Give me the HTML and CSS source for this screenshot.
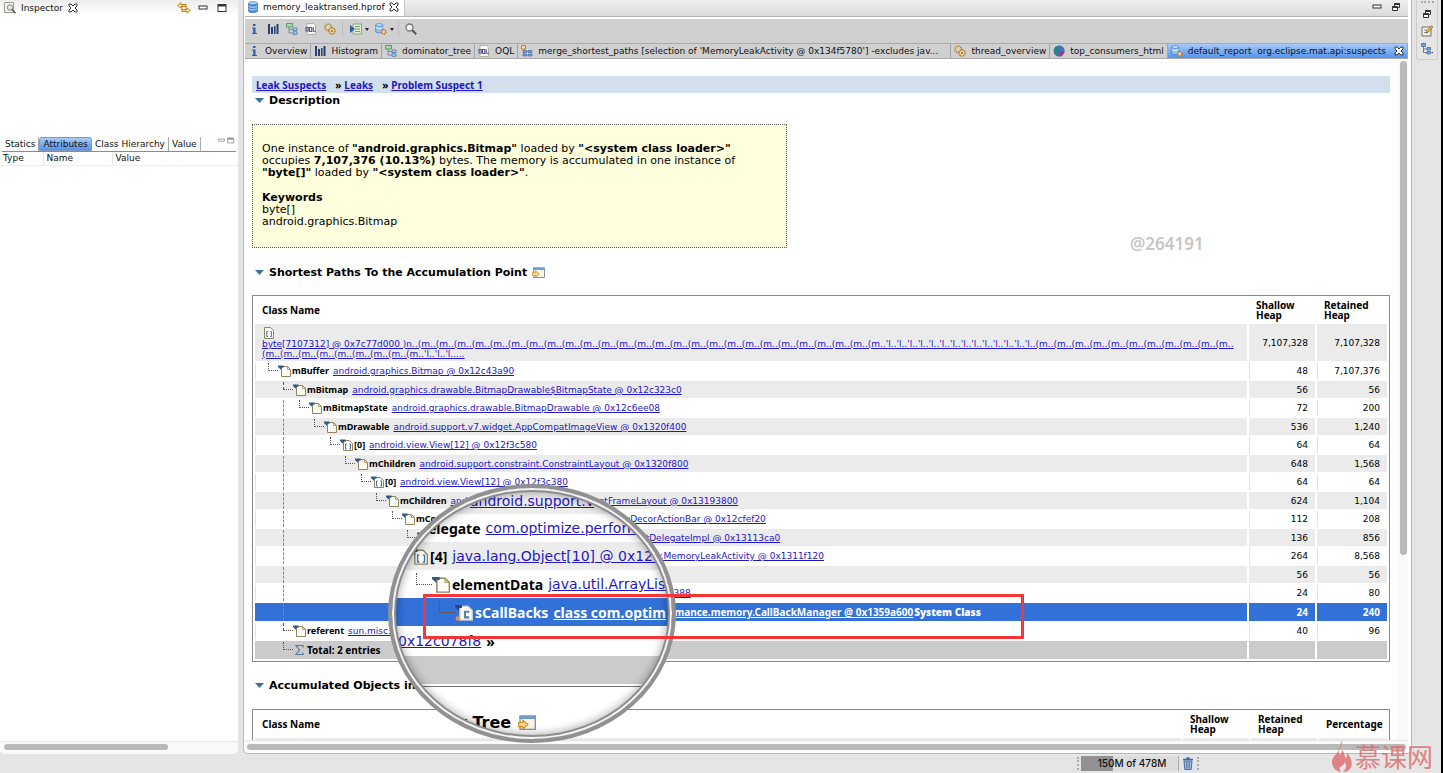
FILE: index.html
```html
<!DOCTYPE html>
<html lang="en">
<head>
    <meta charset="UTF-8">
    <meta name="viewport" content="width=device-width, initial-scale=1.0">
    <title>Memory Analyzer</title>
    <link rel="stylesheet" href="styles.css">
</head>
<body>
    <!-- shared icons -->
    <svg class="sprites" width="0" height="0">
        <symbol id="i-close" viewBox="0 0 10 10"><path d="M1 1h2l2 2 2-2h2v2L7 5l2 2v2H7L5 7 3 9H1V7l2-2-2-2z" fill="#fff" stroke="#333"/></symbol>
        <symbol id="i-min" viewBox="0 0 10 10"><rect x="1" y="3" width="8" height="3" fill="#fff" stroke="#333"/></symbol>
        <symbol id="i-max" viewBox="0 0 10 10"><rect x="1" y="1.500" width="8" height="7" fill="#fff" stroke="#333"/><path d="M1 2.500h8" stroke="#333" stroke-width="2"/></symbol>
        <symbol id="i-restore" viewBox="0 0 10 10"><path d="M3.500 1.500h5v4h-5z" fill="#fff" stroke="#333"/><path d="M3.500 2h5" stroke="#333" stroke-width="2"/><path d="M1.500 4.500h5v4h-5z" fill="#fff" stroke="#333"/><path d="M1.500 5h5" stroke="#333" stroke-width="2"/></symbol>
        <symbol id="i-db" viewBox="0 0 12 12"><path d="M1.500 2.500v7.500c0 2 9 2 9 0V2.500z" fill="#4b8fd8" stroke="#2c63a8" stroke-width=".7"/><ellipse cx="6" cy="2.300" rx="4.500" ry="1.600" fill="#b9dcf8" stroke="#2c63a8" stroke-width=".7"/><path d="M1.500 5c1 1.600 8 1.600 9 0M1.500 7.700c1 1.600 8 1.600 9 0" fill="none" stroke="#d5eafb" stroke-width=".9"/></symbol>
        <symbol id="i-info" viewBox="0 0 12 12"><path d="M5 1h2.500v2H5zM4 4.500h3.500V10H9v1H4v-1h1.200V5.500H4z" fill="#2d5f9e"/></symbol>
        <symbol id="i-hist" viewBox="0 0 12 12"><path d="M1 1h2v10H1zM4 4h2v7H4zM7 3h1.500v8H7zM9.500 1h2v10h-2z" fill="#2a3f74"/></symbol>
        <symbol id="i-tree" viewBox="0 0 12 12"><path d="M3 4v6h5M3 6.500h5" fill="none" stroke="#557f90" stroke-width=".8"/><path d="M.5.5h6v3.500h-6z" fill="#a5dba6" stroke="#3f8e55" stroke-width=".8"/><path d="M7 5h4v2.500H7zM7 8.800h4v2.500H7z" fill="#b4d3ee" stroke="#4676a6" stroke-width=".8"/></symbol>
        <symbol id="i-paths" viewBox="0 0 12 12"><path d="M3 4v6h5M3 6.500h5" fill="none" stroke="#4d719f" stroke-width=".8"/><path d="M.5.5h4v3.500h-4z" fill="#ffd9a8" stroke="#e2731e"/><path d="M2 5.500h3.500v2H2zM7.500 5.500H11v2H7.500zM2 9h3.500v2H2zM7.500 9H11v2H7.500z" fill="#7ea4d8" stroke="#3d68a8" stroke-width=".7"/></symbol>
        <symbol id="i-oql" viewBox="0 0 12 12"><path d="M2 .5h6.500l2 2v9H2z" fill="#f7f7f7" stroke="#a49b8a" stroke-width=".7"/><path d="M1 4.500h2.200v3.500H1zM4.500 4.500h2.200v4H4.500zM8.300 4.300v4H11" fill="none" stroke="#56558c" stroke-width="1.100"/></symbol>
        <symbol id="i-gears" viewBox="0 0 12 12"><circle cx="4.300" cy="4.300" r="3.200" fill="#e4d3b2" stroke="#a87f45" stroke-width="1.600" stroke-dasharray="1.300 .8"/><circle cx="8" cy="8" r="3" fill="#f4dca6" stroke="#b07a2c" stroke-width="1.600" stroke-dasharray="1.300 .7"/><circle cx="8" cy="8" r="1" fill="#8d6327"/></symbol>
        <symbol id="i-run" viewBox="0 0 12 12"><path d="M3 1h8.500v10H3z" fill="#e2eccf" stroke="#7a9a72" stroke-width=".8"/><path d="M5 3.500h5M5 6h5M5 8.500h5" stroke="#6fa070"/><path d="M0 2l5 4-5 4z" fill="#2f5f95"/></symbol>
        <symbol id="i-report" viewBox="0 0 12 12"><path d="M.7 2v6.500c0 1.800 7 1.800 7 0V2z" fill="#8fc0ec" stroke="#3a75b8" stroke-width=".7"/><ellipse cx="4.200" cy="2" rx="3.500" ry="1.300" fill="#d6ecfc" stroke="#3a75b8" stroke-width=".7"/><path d="M.7 4.500c1 1.300 6 1.300 7 0" fill="none" stroke="#fff" stroke-width=".8"/><circle cx="8.800" cy="8.800" r="2.200" fill="#f2cf94" stroke="#b0742a" stroke-width="1.400" stroke-dasharray="1.200 .6"/></symbol>
        <symbol id="i-search" viewBox="0 0 12 12"><circle cx="4.500" cy="4.500" r="3.500" fill="#eef3f7" stroke="#777" stroke-width="1.300"/><path d="M7 7l4.200 4.200" stroke="#6b5544" stroke-width="2"/></symbol>
        <symbol id="i-inspect" viewBox="0 0 12 12"><path d="M.5.5h9v10h-9z" fill="#f4f4ec" stroke="#9a9a8c"/><circle cx="6" cy="5.500" r="2.700" fill="#d9ece0" stroke="#758a80"/><path d="M8 7.500l3.500 3.800" stroke="#555" stroke-width="1.500"/></symbol>
        <symbol id="i-link" viewBox="0 0 14 12"><path d="M.5 3.500L4 .8v1.700h5v2H4v1.700z M13.500 8.500L10 11.200V9.500H5v-2h5V5.800z" fill="#fbe3a0" stroke="#c08a2c"/><path d="M5 2.500v7M9 2.500v7" stroke="#c08a2c"/></symbol>
        <symbol id="i-pie" viewBox="0 0 12 12"><circle cx="6" cy="6" r="5.500" fill="#2d7f91"/><path d="M6 6V.5A5.500 5.500 0 0 1 11.500 6z" fill="#4a6fc0"/><path d="M6 6h5.500A5.500 5.500 0 0 1 6 11.500z" fill="#a8388d"/></symbol>
        <symbol id="i-doc" viewBox="0 0 13 12"><path d="M3.500 1.500h6l3 3v7h-9z" fill="#fdfdf6" stroke="#8d8460"/><path d="M9.500 1.500v3h3" fill="none" stroke="#b3a15e"/><path d="M0 .5h5.500v2.200H3.200V5L0 2z" fill="#34597f"/></symbol>
        <symbol id="i-array" viewBox="0 0 13 12"><path d="M3.500 1.500h6l3 3v7h-9z" fill="#fdfdf6" stroke="#8d8460"/><path d="M6.800 5H5.500v5h1.300M9.200 5h1.300v5H9.200" fill="none" stroke="#49719f"/><path d="M0 .5h5.500v2.200H3.200V5L0 2z" fill="#34597f"/></symbol>
        <symbol id="i-bytes" viewBox="0 0 12 12"><path d="M1.500.5h6l3 3v8h-9z" fill="#fdfdf6" stroke="#8d8460"/><path d="M5 4.500H3.800v5H5M7.200 4.500h1.200v5H7.200" fill="none" stroke="#49719f"/></symbol>
        <symbol id="i-class" viewBox="0 0 13 12"><path d="M3.500 1.500h6l3 3v7h-9z" fill="#fdfdf6" stroke="#c8cdd2"/><path d="M10.300 5.500H7.200v4h3.100" fill="none" stroke="#5c7fa5" stroke-width="1.500"/><path d="M0 .5h5v2.200H3V5L0 2z" fill="#24487e"/><circle cx="2" cy="10.300" r="1.600" fill="#f28a35"/></symbol>
        <symbol id="i-sum" viewBox="0 0 12 12"><path d="M9.500 3.500V1.500H2.500L6 6l-3.500 4.500h7V8.500" fill="none" stroke="#567a99" stroke-width="1.200"/></symbol>
        <symbol id="i-open" viewBox="0 0 13 11"><path d="M1.500 1h11v9.500h-11z" fill="#f6f4ea" stroke="#8d9099"/><path d="M1 .5h12v2.500H1z" fill="#6f9bd1"/><path d="M.5 5.500h3V3.800L7.200 7l-3.700 3.200V8.500h-3z" fill="#fbd789" stroke="#cf8f2c" stroke-width=".8"/></symbol>
        <symbol id="i-twist" viewBox="0 0 9 5"><path d="M0 0h9L4.500 5z" fill="#3d6f9f"/></symbol>
        <symbol id="i-note" viewBox="0 0 12 12"><path d="M1 2h9v9H1z" fill="#f4f4e2" stroke="#6d6d60"/><path d="M3 5h3M3 7.500h4" stroke="#888"/><path d="M5 8l1-2.500L10.500.8l1.300 1.300L7.300 7z" fill="#f4cf3e" stroke="#5c4b1c" stroke-width=".7"/></symbol>
        <symbol id="i-outline" viewBox="0 0 12 12"><path d="M2.500 4v5.500H6M2.500 6H6" fill="none" stroke="#5b7fb0"/><path d="M.5.500h4v3h-4zM6 4.500h3.500V7H6zM6 8.500h3.500V11H6z" fill="#7da3db" stroke="#3e69ab" stroke-width=".8"/><path d="M10.500 9.500h1.500" stroke="#333"/></symbol>
        <symbol id="i-trash" viewBox="0 0 11 13"><path d="M1.500 4h8l-.8 8.500H2.300z" fill="#a9c3e2" stroke="#44689b"/><path d="M4 5v6.500M5.500 5v6.500M7 5v6.500" stroke="#44689b" stroke-width=".7"/><path d="M.5 2.500h10M4 1h3" stroke="#44689b" stroke-width="1.400"/></symbol>
    </svg>

    <div class="workbench">
        <aside class="inspector">
            <div class="view-head">
                <svg class="icon"><use href="#i-inspect"/></svg>
                <span>Inspector</span>
                <button class="tool small" aria-label="Close"><svg><use href="#i-close"/></svg></button>
                <button class="tool link push" aria-label="Link"><svg><use href="#i-link"/></svg></button>
                <button class="tool small" aria-label="Minimize"><svg><use href="#i-min"/></svg></button>
                <button class="tool small" aria-label="Maximize"><svg><use href="#i-max"/></svg></button>
            </div>
            <div class="inspector-top"></div>
            <div class="inspector-tabs">
                <button>Statics</button>
                <button class="active">Attributes</button>
                <button>Class Hierarchy</button>
                <button>Value</button>
                <svg class="mini push"><use href="#i-min"/></svg>
                <svg class="mini"><use href="#i-max"/></svg>
            </div>
            <table class="attributes">
                <tr><th>Type</th><th>Name</th><th>Value</th></tr>
            </table>
            <div class="hscroll"><div class="thumb"></div></div>
        </aside>

        <main class="editor">
            <div class="editor-head">
                <div class="file-tab">
                    <svg class="icon"><use href="#i-db"/></svg>
                    <span>memory_leaktransed.hprof</span>
                    <button class="tool small" aria-label="Close"><svg><use href="#i-close"/></svg></button>
                </div>
                <button class="tool small push" aria-label="Minimize"><svg><use href="#i-min"/></svg></button>
                <button class="tool small" aria-label="Restore"><svg><use href="#i-restore"/></svg></button>
            </div>
            <div class="toolbar">
                <button class="tool" aria-label="Overview"><svg><use href="#i-info"/></svg></button>
                <button class="tool" aria-label="Histogram"><svg><use href="#i-hist"/></svg></button>
                <button class="tool" aria-label="Dominator tree"><svg><use href="#i-tree"/></svg></button>
                <button class="tool" aria-label="OQL"><svg><use href="#i-oql"/></svg></button>
                <button class="tool" aria-label="Threads"><svg><use href="#i-gears"/></svg></button>
                <span class="sep"></span>
                <button class="tool drop" aria-label="Run report"><svg><use href="#i-run"/></svg></button>
                <button class="tool drop" aria-label="Query browser"><svg><use href="#i-report"/></svg></button>
                <span class="sep"></span>
                <button class="tool" aria-label="Search"><svg><use href="#i-search"/></svg></button>
            </div>
            <div class="page-tabs">
                <button><svg class="icon"><use href="#i-info"/></svg>Overview</button>
                <button><svg class="icon"><use href="#i-hist"/></svg>Histogram</button>
                <button><svg class="icon"><use href="#i-tree"/></svg>dominator_tree</button>
                <button><svg class="icon"><use href="#i-oql"/></svg>OQL</button>
                <button class="wide"><svg class="icon"><use href="#i-paths"/></svg>merge_shortest_paths [selection of 'MemoryLeakActivity @ 0x134f5780'] -excludes jav...</button>
                <button><svg class="icon"><use href="#i-gears"/></svg>thread_overview</button>
                <button><svg class="icon"><use href="#i-pie"/></svg>top_consumers_html</button>
                <button class="active"><svg class="icon"><use href="#i-report"/></svg>default_report&nbsp; org.eclipse.mat.api:suspects<svg class="icon x"><use href="#i-close"/></svg></button>
            </div>

            <div class="page">
                <div class="report">
                    <nav class="crumbs">
                        <a href="#">Leak Suspects</a><span>»</span><a href="#">Leaks</a><span>»</span><a href="#">Problem Suspect 1</a>
                    </nav>
                    <h2><svg class="twist"><use href="#i-twist"/></svg>Description</h2>
                    <div class="description">
                        <p>One instance of <b>"android.graphics.Bitmap"</b> loaded by <b>"&lt;system class loader&gt;"</b><br>
                        occupies <b>7,107,376 (10.13%)</b> bytes. The memory is accumulated in one instance of<br>
                        <b>"byte[]"</b> loaded by <b>"&lt;system class loader&gt;"</b>.</p>
                        <p><b>Keywords</b><br>byte[]<br>android.graphics.Bitmap</p>
                    </div>

                    <h2 class="paths-title"><svg class="twist"><use href="#i-twist"/></svg>Shortest Paths To the Accumulation Point <svg class="open"><use href="#i-open"/></svg></h2>
                    <table class="result">
                        <thead>
                            <tr><th>Class Name</th><th class="heap">Shallow Heap</th><th class="heap last">Retained Heap</th></tr>
                        </thead>
                        <tbody>
                            <tr class="root">
                                <td><svg class="icon"><use href="#i-bytes"/></svg><a href="#">byte[7107312] @ 0x7c77d000 )n..(m..(m..(m..(m..(m..(m..(m..(m..(m..(m..(m..(m..(m..(m..(m..(m..(m..(m..(m..(m..(m..(m..(m..(m..(m..(m..'l..'l..'l..'l..'l..'l..'l..'l..'l..'l..'l..'l..'l..'l..(m..(m..(m..(m..(m..(m..(m..(m..(m..(m..(m..<br>(m..(m..(m..(m..(m..(m..(m..(m..(m..'l..'l..'l.....</a></td>
                                <td>7,107,328</td><td>7,107,328</td>
                            </tr>
                            <tr>
                                <td><div class="node"><i class="elbow"></i><svg><use href="#i-doc"/></svg><b>mBuffer</b><a href="#">android.graphics.Bitmap @ 0x12c43a90</a></div></td>
                                <td>48</td><td>7,107,376</td>
                            </tr>
                            <tr>
                                <td><div class="node"><i class="ind"></i><i class="elbow tee"></i><svg><use href="#i-doc"/></svg><b>mBitmap</b><a href="#">android.graphics.drawable.BitmapDrawable$BitmapState @ 0x12c323c0</a></div></td>
                                <td>56</td><td>56</td>
                            </tr>
                            <tr>
                                <td><div class="node"><i class="ind"></i><i class="ind"></i><i class="elbow"></i><svg><use href="#i-doc"/></svg><b>mBitmapState</b><a href="#">android.graphics.drawable.BitmapDrawable @ 0x12c6ee08</a></div></td>
                                <td>72</td><td>200</td>
                            </tr>
                            <tr>
                                <td><div class="node"><i class="ind"></i><i class="ind"></i><i class="ind"></i><i class="elbow"></i><svg><use href="#i-doc"/></svg><b>mDrawable</b><a href="#">android.support.v7.widget.AppCompatImageView @ 0x1320f400</a></div></td>
                                <td>536</td><td>1,240</td>
                            </tr>
                            <tr>
                                <td><div class="node"><i class="ind"></i><i class="ind"></i><i class="ind"></i><i class="ind"></i><i class="elbow"></i><svg><use href="#i-array"/></svg><b>[0]</b><a href="#">android.view.View[12] @ 0x12f3c580</a></div></td>
                                <td>64</td><td>64</td>
                            </tr>
                            <tr>
                                <td><div class="node"><i class="ind"></i><i class="ind"></i><i class="ind"></i><i class="ind"></i><i class="ind"></i><i class="elbow"></i><svg><use href="#i-doc"/></svg><b>mChildren</b><a href="#">android.support.constraint.ConstraintLayout @ 0x1320f800</a></div></td>
                                <td>648</td><td>1,568</td>
                            </tr>
                            <tr>
                                <td><div class="node"><i class="ind"></i><i class="ind"></i><i class="ind"></i><i class="ind"></i><i class="ind"></i><i class="ind"></i><i class="elbow"></i><svg><use href="#i-array"/></svg><b>[0]</b><a href="#">android.view.View[12] @ 0x12f3c380</a></div></td>
                                <td>64</td><td>64</td>
                            </tr>
                            <tr>
                                <td><div class="node"><i class="ind"></i><i class="ind"></i><i class="ind"></i><i class="ind"></i><i class="ind"></i><i class="ind"></i><i class="ind"></i><i class="elbow"></i><svg><use href="#i-doc"/></svg><b>mChildren</b><a href="#">android.support.v7.widget.ContentFrameLayout @ 0x13193800</a></div></td>
                                <td>624</td><td>1,104</td>
                            </tr>
                            <tr>
                                <td><div class="node"><i class="ind"></i><i class="ind"></i><i class="ind"></i><i class="ind"></i><i class="ind"></i><i class="ind"></i><i class="ind"></i><i class="ind"></i><i class="elbow"></i><svg><use href="#i-doc"/></svg><b>mContentView</b><a href="#">android.support.v7.app.WindowDecorActionBar @ 0x12cfef20</a></div></td>
                                <td>112</td><td>208</td>
                            </tr>
                            <tr>
                                <td><div class="node"><i class="ind"></i><i class="ind"></i><i class="ind"></i><i class="ind"></i><i class="ind"></i><i class="ind"></i><i class="ind"></i><i class="ind"></i><i class="ind"></i><i class="elbow"></i><svg><use href="#i-doc"/></svg><b>mActionBar</b><a href="#">android.support.v7.app.AppCompatDelegateImpl @ 0x13113ca0</a></div></td>
                                <td>136</td><td>856</td>
                            </tr>
                            <tr>
                                <td><div class="node"><i class="ind"></i><i class="ind"></i><i class="ind"></i><i class="ind"></i><i class="ind"></i><i class="ind"></i><i class="ind"></i><i class="ind"></i><i class="ind"></i><i class="ind"></i><i class="elbow"></i><svg><use href="#i-doc"/></svg><b>mDelegate</b><a href="#">com.optimize.performance.memory.MemoryLeakActivity @ 0x1311f120</a></div></td>
                                <td>264</td><td>8,568</td>
                            </tr>
                            <tr>
                                <td><div class="node"><i class="ind"></i><i class="ind"></i></div></td>
                                <td>56</td><td>56</td>
                            </tr>
                            <tr>
                                <td><div class="node"><i class="ind"></i><i class="ind"></i><i class="ind"></i><i class="ind"></i><i class="ind"></i><i class="ind"></i><i class="ind"></i><i class="ind"></i><i class="ind"></i><i class="ind"></i><i class="ind"></i><i class="ind"></i><i class="elbow"></i><svg><use href="#i-doc"/></svg><b>elementData</b><a href="#">java.util.ArrayList @ 0x12e78388</a></div></td>
                                <td>24</td><td>80</td>
                            </tr>
                            <tr class="selected">
                                <td><div class="node"><i class="ind"></i><i class="ind"></i><i class="ind"></i><i class="ind"></i><i class="ind"></i><i class="ind"></i><i class="ind"></i><i class="ind"></i><i class="ind"></i><i class="ind"></i><i class="ind"></i><i class="ind"></i><i class="ind"></i><i class="elbow"></i><svg><use href="#i-class"/></svg><b>sCallBacks</b><a href="#">class com.optimize.performance.memory.CallBackManager @ 0x1359a600</a><b>System Class</b></div></td>
                                <td>24</td><td>240</td>
                            </tr>
                            <tr>
                                <td><div class="node"><i class="ind"></i><i class="elbow tee"></i><svg><use href="#i-doc"/></svg><b>referent</b><a href="#">sun.misc.Cleaner</a></div></td>
                                <td>40</td><td>96</td>
                            </tr>
                            <tr class="total">
                                <td><div class="node"><i class="ind"></i><i class="elbow"></i><svg><use href="#i-sum"/></svg><b>Total: 2 entries</b></div></td>
                                <td></td><td></td>
                            </tr>
                        </tbody>
                    </table>

                    <h2 class="objects-title"><svg class="twist"><use href="#i-twist"/></svg>Accumulated Objects in Dominator Tree</h2>
                    <table class="result">
                        <thead>
                            <tr><th>Class Name</th><th class="heap">Shallow Heap</th><th class="heap">Retained Heap</th><th class="percent">Percentage</th></tr>
                        </thead>
                        <tbody>
                            <tr class="root"><td></td><td></td><td></td><td></td></tr>
                        </tbody>
                    </table>
                </div>
                <div class="vscroll"><div class="thumb"></div></div>
            </div>
            <div class="hscroll"><div class="thumb"></div></div>
        </main>

        <aside class="trim">
            <div class="trim-box">
                <span class="grip"></span>
                <button class="tool small" aria-label="Restore"><svg><use href="#i-restore"/></svg></button>
                <button class="tool" aria-label="Notes"><svg><use href="#i-note"/></svg></button>
                <button class="tool" aria-label="Outline"><svg><use href="#i-outline"/></svg></button>
            </div>
        </aside>

        <!-- magnifier over the result table -->
        <div class="lens">
            <div class="lens-row r1"><a href="#">android.support.v</a></div>
            <div class="lens-row r2"><b>elegate</b><a href="#">com.optimize.perform</a></div>
            <div class="lens-row r3"><svg><use href="#i-array"/></svg><b>[4]</b><a href="#">java.lang.Object[10] @ 0x12e</a></div>
            <div class="lens-row r4"><i class="elbow"></i><svg><use href="#i-doc"/></svg><b>elementData</b><a href="#">java.util.ArrayList</a></div>
            <div class="lens-row r5"><i class="elbow"></i><svg><use href="#i-class"/></svg><b>sCallBacks</b><a href="#">class com.optim</a></div>
            <div class="lens-row r6"><a href="#">0x12c078f8</a><b>»</b></div>
            <div class="lens-row r7"></div>
            <div class="lens-row r8"><strong>r Tree</strong><svg><use href="#i-open"/></svg></div>
        </div>
        <div class="marker"></div>
        <div class="user-mark">@264191</div>
    </div>

    <footer class="status">
        <span class="dots"></span>
        <div class="heap-status"><span>150M of 478M</span></div>
        <button class="tool trash" aria-label="Run garbage collector"><svg><use href="#i-trash"/></svg></button>
        <span class="dots"></span>
    </footer>
    <div class="site-mark">
        <svg viewBox="0 0 20 32"><path d="M9 0c2 5-1 7-2 10-1 2 0 4 1 5 1-2 2-3 2-5 3 3 2 6 4 8 1-1 1-3 1-5 4 4 6 10 4 14-1 3-4 5-8 5 3-3 4-6 2-10-1 3-3 4-5 5-1 2 0 3 1 5C3 31 0 27 0 22c0-5 4-7 6-11 2-4 3-7 3-11z" fill="#dc6b6b"/></svg>
        <span>慕课网</span>
    </div>
</body>
</html>
```
FILE: styles.css
```css
* {
    box-sizing: border-box;
}

body {
    margin: 0;
    height: 100vh;
    display: flex;
    flex-direction: column;
    overflow: hidden;
    position: relative;
    background-color: #e5e5e5;
    border-right: 2px solid #000;
    font-family: "DejaVu Sans", sans-serif;
    font-size: 9px;
    color: #111;
}

.sprites {
    position: absolute;
}

button {
    font: inherit;
    color: inherit;
    border: none;
    padding: 0;
    background: none;
}

.icon {
    width: 12px;
    height: 12px;
    flex: none;
}

.push {
    margin-left: auto;
}

.tool {
    display: flex;
    align-items: center;
    flex: none;
    width: 12px;
    height: 12px;
}

.tool svg {
    width: 100%;
    height: 100%;
}

.tool.small {
    width: 10px;
    height: 10px;
}

.workbench {
    flex: 1;
    min-height: 0;
    display: flex;
    position: relative;
}

/* inspector */

.inspector {
    flex: 0 0 238px;
    display: flex;
    flex-direction: column;
    background-color: #fff;
    border-radius: 0 0 5px 5px;
    margin-right: 5px;
}

.view-head {
    display: flex;
    align-items: center;
    height: 15px;
    padding: 0 7px 0 4px;
    gap: 5px;
    background: linear-gradient(#ededed, #fff);
}

.view-head .small {
    margin-right: 4px;
}

.view-head .link {
    width: 14px;
    margin-left: auto;
    margin-right: 2px;
}

.inspector-top {
    height: 122px;
}

.inspector-tabs {
    display: flex;
    align-items: stretch;
    height: 15px;
    margin: 0 2px;
    border-bottom: 1px solid #8a8a8a;
}

.inspector-tabs button {
    padding: 0 3px;
    border-right: 1px solid #aaa;
}

.inspector-tabs .active {
    background: linear-gradient(#a9cbf7, #5592ea);
    border: 1px solid #7c98c0;
    border-radius: 3px 3px 0 0;
}

.mini {
    width: 7px;
    height: 7px;
    margin-right: 2px;
    opacity: 0.6;
}

.mini.push {
    margin-left: auto;
}

.attributes {
    width: 100%;
    table-layout: fixed;
    border-collapse: collapse;
}

.attributes th {
    height: 13px;
    padding: 0 3px;
    font-weight: 400;
    text-align: left;
    border-right: 1px solid #e4e4e4;
    border-bottom: 1px solid #f0f0f0;
}

.attributes th:nth-child(1) {
    width: 43px;
}

.attributes th:nth-child(2) {
    width: 69px;
}

.attributes th:nth-child(3) {
    border-right: none;
}

.hscroll {
    height: 12px;
    padding: 3px 2px;
    background-color: #fafafa;
    border-top: 1px solid #e4e4e4;
}

.hscroll .thumb {
    height: 6px;
    border-radius: 3px;
    background-color: #b9b9b9;
}

.inspector .hscroll {
    height: 13px;
    margin-top: auto;
    padding: 2px 4px;
    border-radius: 0 0 5px 5px;
}

.inspector .thumb {
    width: 164px;
}

/* editor */

.editor {
    flex: 1;
    min-width: 0;
    display: flex;
    flex-direction: column;
    background-color: #fff;
    border: 1px solid #b8b8b8;
    border-top: none;
    border-radius: 0 0 5px 5px;
    padding: 0 3px 1px 1px;
}

.editor-head {
    display: flex;
    align-items: center;
    height: 17px;
    padding: 0 7px 2px 0;
    gap: 9px;
    background: linear-gradient(#f0f0f0, #dadada);
    border-bottom: 1px solid #b5b5b5;
}

.file-tab {
    display: flex;
    align-items: center;
    height: 17px;
    gap: 4px;
    padding: 0 5px 0 2px;
    background-color: #fff;
    border-right: 1px solid #c5c5c5;
}

.toolbar {
    display: flex;
    align-items: center;
    height: 24px;
    margin-top: 2px;
    padding: 0 3px 4px;
    gap: 7px;
    background-color: #d0d0d0;
}

.toolbar .sep {
    width: 1px;
    height: 14px;
    background-color: #bbb;
    margin: 0 -1px;
}

.tool.drop {
    width: 20px;
    gap: 2px;
    margin-right: -2px;
}

.tool.drop svg {
    width: 14px;
}

.tool.drop::after {
    content: "";
    border: 2px solid transparent;
    border-top: 3px solid #222;
    border-bottom: none;
}

.page-tabs {
    display: flex;
    height: 16px;
    background-color: #d0d0d0;
    border-top: 1px solid #aaa;
    border-bottom: 1px solid #aaa;
}

.page-tabs button {
    display: flex;
    align-items: center;
    gap: 5px;
    padding: 0 3px;
    white-space: nowrap;
    border-right: 1px solid #a5a5a5;
}

.page-tabs .wide {
    flex: 1;
    min-width: 0;
    overflow: hidden;
}

.page-tabs .active {
    background: linear-gradient(#a8cbf8, #5392ee);
}

.page-tabs .x {
    width: 10px;
    height: 10px;
    margin-left: 3px;
}

.page {
    flex: 1;
    min-height: 0;
    display: flex;
    overflow: hidden;
}

.vscroll {
    flex: 0 0 11px;
    padding: 2px 1px 2px 3px;
    background-color: #fafafa;
}

.vscroll .thumb {
    width: 7px;
    height: 73%;
    border-radius: 4px;
    background-color: #b9b9b9;
}

/* report */

.report {
    flex: 1;
    min-width: 0;
    padding: 17px 7px 0 7px;
    color: #000;
}

.report a,
.lens a {
    color: #1f18c4;
}

.crumbs {
    display: flex;
    align-items: center;
    height: 17px;
    padding: 0 4px;
    font-family: "Noto Sans", sans-serif;
    font-size: 10px;
    font-weight: 700;
    background-color: #d2dfec;
}

.crumbs span {
    margin: 0 3px 0 9px;
}

h2 {
    display: flex;
    align-items: center;
    gap: 5px;
    height: 14px;
    margin: 0;
    padding-left: 3px;
    font-size: 11px;
    font-weight: 700;
    white-space: nowrap;
}

.twist {
    width: 9px;
    height: 5px;
}

.open {
    width: 13px;
    height: 11px;
}

.description {
    width: 535px;
    height: 124px;
    margin-top: 17px;
    padding: 18px 9px;
    background-color: #ffffdd;
    border: 1px dotted #555;
    font-size: 11px;
    line-height: 12px;
    white-space: nowrap;
}

.description p {
    margin: 0 0 13px;
}

.paths-title {
    margin: 17px 0 16px;
}

.objects-title {
    margin: 16px 0 17px;
}

.result {
    width: 100%;
    border: 1px solid #8a8a8a;
    border-collapse: separate;
    border-spacing: 2px;
    font-size: 9px;
}

.result th {
    height: 24px;
    padding: 0 7px;
    font-family: "Noto Sans", sans-serif;
    font-size: 10px;
    line-height: 10px;
    text-align: left;
}

.result .heap {
    width: 66px;
}

.result .last {
    width: 70px;
}

.result .percent {
    width: 68px;
    padding-right: 4px;
}

.result td {
    height: 17px;
    padding: 0 7px;
    line-height: 10px;
    text-align: right;
    white-space: nowrap;
    background-color: #ebebeb;
}

.result td:first-child {
    text-align: left;
}

.result tr:nth-child(even) td {
    height: 16px;
    background-color: #fff;
    box-shadow: inset 1px 0 #e2e2e2;
}

.result .root td {
    height: 37px;
}

.root .icon {
    display: block;
    width: 12px;
    height: 12px;
    margin-left: 1px;
}

.result .selected td {
    height: 18px;
    background-color: #3171d8;
    color: #fff;
    font-weight: 700;
    font-family: "Noto Sans", sans-serif;
    font-size: 10px;
}

.report .selected a {
    color: #fff;
}

.selected .node b:first-of-type {
    font-size: 9px;
}

.result .total td {
    height: 18px;
    background-color: #cbcbcb;
}

.node {
    display: flex;
    align-items: center;
    height: 16px;
    padding-left: 6px;
}

.node b {
    font-family: "Noto Sans", sans-serif;
    margin: 0 4px 0 1px;
}

.node svg {
    flex: none;
    width: 13px;
    height: 12px;
}

.total b {
    font-size: 10px;
}

.ind {
    flex: none;
    align-self: stretch;
    width: 15px;
}

.ind:nth-child(even) {
    width: 16px;
}

.ind:nth-child(2) {
    border-left: 1px dashed #888;
}

.elbow {
    flex: none;
    align-self: flex-start;
    width: 10px;
    height: 8px;
    border-left: 1px dotted #555;
    border-bottom: 1px dotted #555;
}

.tee {
    border-left-style: dashed;
}

/* right trim */

.trim {
    flex: 0 0 29px;
    padding: 0 3px 0 4px;
}

.trim-box {
    display: flex;
    flex-direction: column;
    align-items: center;
    gap: 6px;
    height: 60px;
    padding-top: 1px;
    border: 1px solid #ccc;
    border-top: none;
    border-radius: 0 0 3px 3px;
}

.grip {
    width: 13px;
    border-top: 2px dotted #aaa;
}

/* magnifier */

.lens {
    position: absolute;
    left: 388px;
    top: 484px;
    width: 288px;
    height: 259px;
    overflow: hidden;
    border: 4px solid #919191;
    border-radius: 50%;
    background-color: #fff;
    font-size: 14px;
    color: #000;
}

.lens::after {
    content: "";
    position: absolute;
    inset: 0;
    border-radius: 50%;
    box-shadow: inset 0 0 0 2px #f4f4f4, inset 0 0 0 4px #8d8d8d, inset 0 0 8px 5px rgba(0, 0, 0, 0.3);
}

.lens-row {
    display: flex;
    align-items: center;
    gap: 5px;
    height: 28px;
    white-space: nowrap;
}

.lens-row b {
    font-family: "Noto Sans", sans-serif;
}

.lens-row svg {
    flex: none;
    width: 18px;
    height: 17px;
    margin-right: -3px;
}

.lens .elbow {
    width: 16px;
    height: 12px;
    margin: 3px -5px 0 0;
}

.r1 {
    height: 26px;
    padding-left: 78px;
    background-color: #ececec;
}

.r2 {
    padding-left: 36px;
}

.r3 {
    padding-left: 18px;
    background-color: #ececec;
}

.r4 {
    padding-left: 24px;
}

.r5 {
    padding-left: 47px;
    background-color: #3171d8;
    color: #fff;
}

.lens .r5 a {
    color: #fff;
    font-family: "Noto Sans", sans-serif;
    font-weight: 700;
}

.r6 {
    height: 30px;
    padding-left: 6px;
}

.r7 {
    background-color: #cbcbcb;
}

.r8 {
    height: 64px;
    padding: 8px 0 0 67px;
    gap: 7px;
    border-top: 1px solid #777;
    margin-top: 2px;
    font-size: 16px;
}

.marker {
    position: absolute;
    left: 423px;
    top: 594px;
    width: 601px;
    height: 45px;
    border: 3px solid #fa3535;
}

.user-mark {
    position: absolute;
    left: 1130px;
    top: 232px;
    font-family: "Noto Sans", sans-serif;
    font-size: 17px;
    font-weight: 600;
    line-height: 24px;
    color: #c6c6c6;
}

/* status bar */

.status {
    display: flex;
    align-items: center;
    justify-content: flex-end;
    height: 19px;
    padding-right: 242px;
    gap: 2px;
}

.heap-status {
    width: 98px;
    height: 15px;
    line-height: 15px;
    text-align: center;
    padding-left: 5px;
    font-family: Inter, sans-serif;
    font-size: 10px;
    font-weight: 500;
    background: linear-gradient(90deg, #919191 32px, #dcdcdc 32px);
    border-right: 1px solid #aaa;
}

.trash {
    width: 14px;
    height: 15px;
    padding: 1px;
    background-color: #dfe6ef;
}

.dots {
    height: 13px;
    border-left: 2px dotted #aaa;
}

.site-mark {
    position: absolute;
    right: 8px;
    bottom: 1px;
    display: flex;
    align-items: center;
    gap: 3px;
    opacity: 0.8;
    color: #dc6b6b;
    font-family: "Noto Sans CJK SC", sans-serif;
    font-size: 26px;
    line-height: 32px;
}

.site-mark svg {
    width: 20px;
    height: 32px;
}
```
